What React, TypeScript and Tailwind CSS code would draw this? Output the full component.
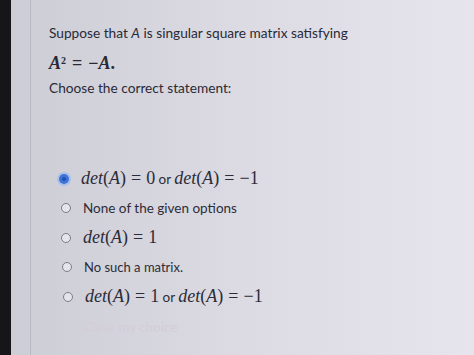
import React from "react";

const sans = { fontFamily: 'Lato, "Open Sans", sans-serif' };

function M({ children }: { children: React.ReactNode }) {
  return (
    <span className="font-['Liberation_Serif',serif] text-[18px] italic">
      {children}
    </span>
  );
}

function N({ children }: { children: React.ReactNode }) {
  return (
    <span className="font-['Liberation_Serif',serif] text-[18px]">
      {children}
    </span>
  );
}

function Eq() {
  return (
    <span className="mx-[5px] font-['Liberation_Serif',serif] text-[18px]">
      =
    </span>
  );
}

function Radio({ checked }: { checked?: boolean }) {
  if (checked) {
    return (
      <span className="flex h-[10px] w-[10px] items-center justify-center rounded-full bg-[#3d74d6] ring-2 ring-[#a9c0ea]">
        <span className="h-[4px] w-[4px] rounded-full bg-[#1f4fb0]" />
      </span>
    );
  }
  return (
    <span className="h-[10px] w-[10px] rounded-full border-[1.5px] border-[#7c7c86] bg-[#e4e4ea]" />
  );
}

function Option({
  checked,
  children,
  indent,
}: {
  checked?: boolean;
  children: React.ReactNode;
  indent: string;
}) {
  return (
    <div className={`flex h-[29.5px] items-center gap-[12px] ${indent}`}>
      <Radio checked={checked} />
      <div className="text-[13.5px] text-[#2c2c38]">{children}</div>
    </div>
  );
}

export default function App() {
  return (
    <div
      className="flex h-[355px] w-[474px] overflow-hidden bg-[#141418]"
      style={sans}
    >
      <div className="w-[11px] shrink-0 bg-[#16161a]" />
      <div className="flex flex-1 bg-gradient-to-r from-[#cdcdd6] via-[#dcdbe3] to-[#e6e4ec]">
        <div className="w-[20px] shrink-0 border-r border-[#b9b9c4]" />
        <div className="flex flex-1 flex-col pl-[18px] pt-[24px] text-[#2a2a36]">
          <div className="text-[13.7px] leading-[18px]">
            Suppose that <i>A</i> is singular square matrix satisfying
          </div>
          <div className="mt-[8px] h-[20px] font-bold">
            <M>A</M>
            <sup className="font-['Liberation_Serif',serif] text-[10px]">2</sup>
            <span className="mx-[6px] font-['Liberation_Serif',serif] text-[18px]">
              =
            </span>
            <N>−</N>
            <M>A</M>
            <N>.</N>
          </div>
          <div className="mt-[9px] text-[13.7px] leading-[18px]">
            Choose the correct statement:
          </div>
          <div className="mt-[67px] flex flex-col">
            <Option checked indent="pl-[10px]">
              <M>det</M>
              <N>(</N>
              <M>A</M>
              <N>)</N>
              <Eq />
              <N>0</N> or <M>det</M>
              <N>(</N>
              <M>A</M>
              <N>)</N>
              <Eq />
              <N>−1</N>
            </Option>
            <Option indent="pl-[12px]">None of the given options</Option>
            <Option indent="pl-[12px]">
              <M>det</M>
              <N>(</N>
              <M>A</M>
              <N>)</N>
              <Eq />
              <N>1</N>
            </Option>
            <Option indent="pl-[13px]">
              <span className="text-[13px]">No such a matrix.</span>
            </Option>
            <Option indent="pl-[14px]">
              <M>det</M>
              <N>(</N>
              <M>A</M>
              <N>)</N>
              <Eq />
              <N>1</N> or <M>det</M>
              <N>(</N>
              <M>A</M>
              <N>)</N>
              <Eq />
              <N>−1</N>
            </Option>
            <div className="mt-[5px] pl-[35px] text-[13.5px] text-[#d4cdd8]">
              Clear my choice
            </div>
          </div>
        </div>
      </div>
    </div>
  );
}
